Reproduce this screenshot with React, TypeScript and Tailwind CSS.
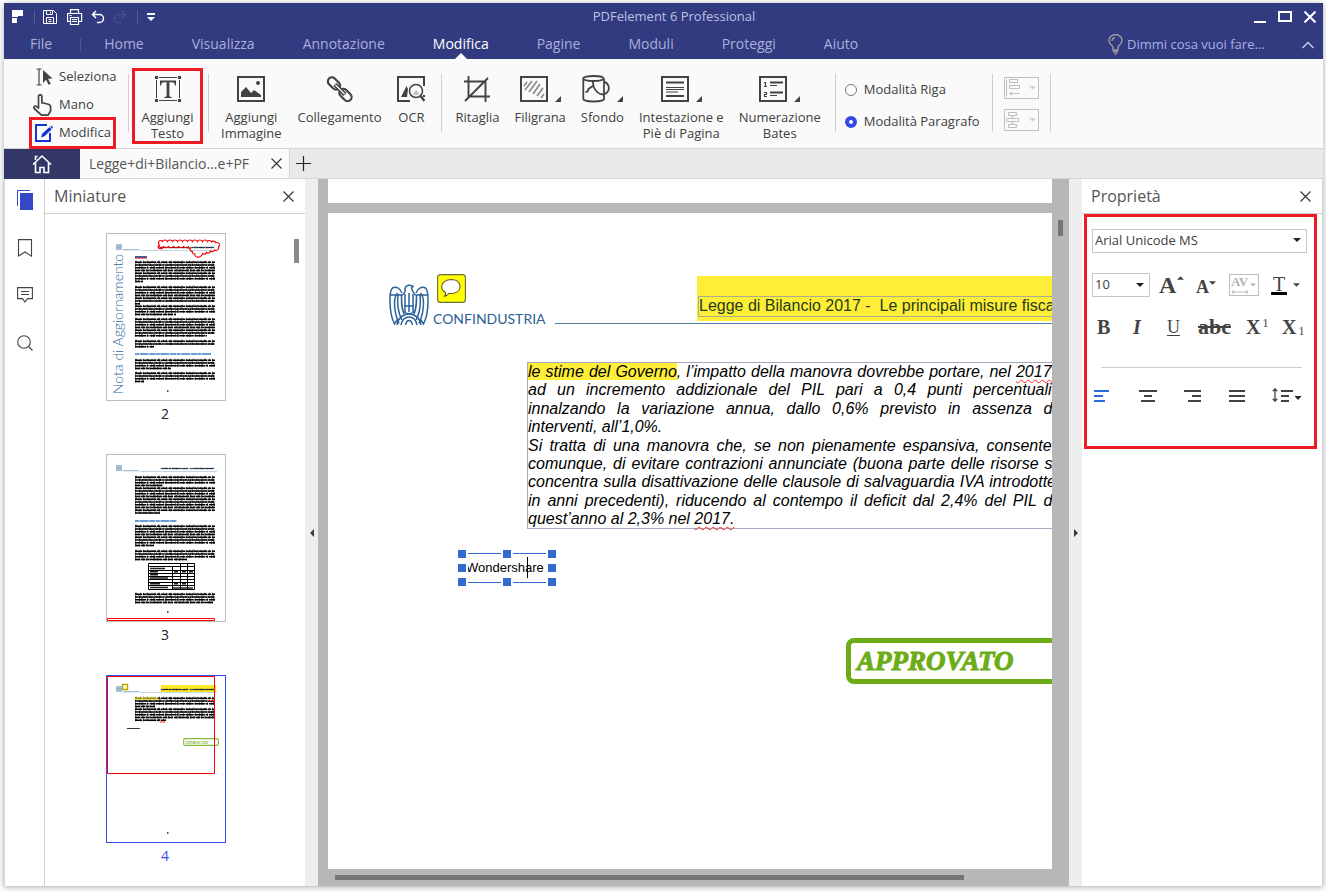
// App.tsx - PDF editor window: ribbon, thumbnails, page view and text properties
import React, { useState } from 'react';
import clsx from 'clsx';

const MENU = ['Home', 'Visualizza', 'Annotazione', 'Modifica', 'Pagine', 'Moduli', 'Proteggi', 'Aiuto'];

/* ---------- small shared pieces ---------- */

function CloseIcon({ className }: { className?: string }) {
  return (
    <svg viewBox="0 0 11 11" className={clsx('size-[11px]', className)} fill="none" stroke="currentColor" strokeWidth="1.1">
      <path d="M.5.5l10 10M10.5.5l-10 10" />
    </svg>
  );
}

function Separator() {
  return <div className="mt-[15px] h-[58px] w-px shrink-0 bg-[#cfcfcf]" />;
}

function DownCaret({ className }: { className?: string }) {
  return (
    <svg viewBox="0 0 8 4" className={clsx('h-1', className)} fill="currentColor">
      <path d="M0 0h8L4 4z" />
    </svg>
  );
}

interface RibbonButtonProps {
  lines: string[];
  icon: React.ReactNode;
  menu?: boolean;
}

function RibbonButton({ lines, icon, menu }: RibbonButtonProps) {
  return (
    <button className="flex shrink-0 flex-col items-center">
      <span className="flex h-7 items-end gap-[7px]">
        <svg viewBox="0 0 28 28" className="size-7" fill="none" stroke="#434343" strokeWidth="2">
          {icon}
        </svg>
        {menu && (
          <svg viewBox="0 0 6 6" className="mb-px size-1.5" fill="#434343">
            <path d="M6 0v6H0z" />
          </svg>
        )}
      </span>
      <span className="mt-1.5 text-center text-[13px] leading-4 whitespace-nowrap">
        {lines.map((line) => (
          <span key={line} className="block">{line}</span>
        ))}
      </span>
    </button>
  );
}

/* ---------- title bar and menu ---------- */

function TitleBar() {
  return (
    <div className="flex h-[27px] items-center text-white">
      <div className="flex flex-1 items-center pl-2">
        <svg viewBox="0 0 12 14" className="h-3.5 w-3" fill="#fff">
          <path d="M0 0h11v6H6v1H0zM0 8h5v5H0z" />
        </svg>
        <div className="ml-2.5 h-3.5 w-px bg-[#535b9c]" />
        <button aria-label="Salva" className="ml-2">
          <svg viewBox="0 0 14 14" className="size-3.5" fill="none" stroke="#fff">
            <path d="M.5.5h10l3 3v10H.5zM3.500.5v4h6v-4M7.500 1.500v2M3.500 13V7.500h7V13M5.500 9.500h3M5.500 11.500h3" />
          </svg>
        </button>
        <button aria-label="Stampa" className="ml-2.5">
          <svg viewBox="0 0 16 16" className="size-4" fill="none" stroke="#fff" strokeWidth="1.2">
            <path d="M3.500 4.500V.6h8v3.900M3 12.500H.6v-8h14v8H12M3.500 8.500h8v7h-8zM5 10.500h5M5 12.500h5M2.500 6.500h2" />
          </svg>
        </button>
        <button aria-label="Annulla" className="ml-2">
          <svg viewBox="0 0 14 14" className="size-3.5" fill="none" stroke="#fff" strokeWidth="1.500">
            <path d="M5 1L1.500 4.500 5 8M1.500 4.500h7a4 4 0 010 8H6" />
          </svg>
        </button>
        <button aria-label="Ripeti" className="ml-2">
          <svg viewBox="0 0 14 14" className="size-3.5" fill="none" stroke="#4a5296" strokeWidth="1.200">
            <path d="M9 1l3.500 3.500L9 8M12.500 4.500h-7a4 4 0 000 8H8" />
          </svg>
        </button>
        <div className="ml-2.5 h-3.5 w-px bg-[#535b9c]" />
        <button aria-label="Personalizza barra" className="ml-[9px]">
          <svg viewBox="0 0 8 8" className="size-2" fill="#fff">
            <path d="M0 0h8v2H0zM0 4h8L4 8z" />
          </svg>
        </button>
      </div>
      <div className="pl-5 text-[13px] text-[#bcc1e4]">PDFelement 6 Professional</div>
      <div className="flex flex-1 items-center justify-end gap-3 pr-[7px]">
        <button aria-label="Riduci a icona" className="flex h-3 items-end">
          <span className="block h-0.5 w-3 bg-white" />
        </button>
        <button aria-label="Ingrandisci" className="h-[11px] w-3.5 border-2 border-white" />
        <button aria-label="Chiudi">
          <svg viewBox="0 0 12 12" className="size-3" fill="none" stroke="#fff" strokeWidth="2">
            <path d="M.5.5l11 11M11.500.5l-11 11" />
          </svg>
        </button>
      </div>
    </div>
  );
}

function MenuBar() {
  const [active, setActive] = useState('Modifica');
  return (
    <nav className="flex h-[29px] items-center pl-[26px] text-sm text-[#a9afdb]">
      <button className="pb-0.5">File</button>
      <div className="ml-7 h-3.5 w-px bg-[#4c5597]" />
      <div className="ml-[23px] flex h-full gap-12">
        {MENU.map((item) => (
          <button
            key={item}
            onClick={() => setActive(item)}
            className={clsx('relative pb-0.5', item === active && 'text-white')}
          >
            {item}
            {item === active && (
              <svg viewBox="0 0 12 6" className="absolute bottom-0 left-1/2 h-1.5 w-3 -translate-x-1/2" fill="#fafafa">
                <path d="M6 0l6 6H0z" />
              </svg>
            )}
          </button>
        ))}
      </div>
      <label className="ml-auto flex items-center gap-1">
        <svg viewBox="0 0 15 21" className="h-[21px] w-[15px]" fill="none" stroke="#9d9d9d" strokeWidth="1.400">
          <path d="M5 16v-3C4 11 1 10 1 6.500a6.500 6 0 0113 0C14 10 11 11 10 13v3zM4 7c0-2 1-3 3-3.200" />
          <path d="M5 17.500h5M6.500 19.800h2" strokeWidth="1.800" />
        </svg>
        <input
          aria-label="Dimmi cosa vuoi fare"
          placeholder="Dimmi cosa vuoi fare..."
          className="w-[174px] bg-transparent text-[13px] outline-none placeholder:text-[#a9b0e4]"
        />
      </label>
      <button aria-label="Comprimi barra" className="pr-2">
        <svg viewBox="0 0 14 8" className="h-2 w-3.5" fill="none" stroke="#cfd3ef" strokeWidth="1.300">
          <path d="M1.500 7L7 1.500 12.500 7" />
        </svg>
      </button>
    </nav>
  );
}

/* ---------- ribbon ---------- */

function ToolList() {
  return (
    <div className="flex w-24 shrink-0 flex-col items-start gap-0.5 pt-[5px] text-[13px]">
      <button className="flex h-[26px] items-center gap-1.5 pl-px">
        <svg viewBox="0 0 20 20" className="size-5" fill="none" stroke="#434343">
          <path d="M3.500 2h5M3.500 18h5M6 2v16" strokeWidth="1.200" />
          <path d="M10 3l9.500 8.500-4.500.2 2.800 5-2.200 1.100L13 12.800 10 16z" fill="#434343" stroke="none" />
        </svg>
        Seleziona
      </button>
      <button className="flex h-[26px] items-center gap-1.5 pl-px">
        <svg viewBox="0 0 20 22" className="h-[22px] w-5" fill="none" stroke="#434343" strokeWidth="1.700" strokeLinejoin="round">
          <path d="M5.500 12V2.500a1.700 1.700 0 013.400 0V9h1.800l5.300 1.500c1.200.5 1.600 1.200 1.600 2.500v4L15 21.200H8.500L1.200 14.500c-.8-1 .2-2.800 1.700-2.300l2.600 2z" />
        </svg>
        Mano
      </button>
      <button className="flex h-[26px] items-center gap-1.5 pr-0.5 pl-px outline-3 outline-[#ed1c24]">
        <svg viewBox="0 0 20 20" className="size-5" fill="none" stroke="#1636d2" strokeWidth="2">
          <path d="M14 2H3v16h14v-8" />
          <path d="M8 14.500l1.200-3.800L16.500 4l2.300 2.300-7.200 7z" fill="#1636d2" stroke="none" />
          <path d="M17.200 3.400l1-1 2 2-1 1z" fill="#1636d2" stroke="none" />
        </svg>
        Modifica
      </button>
    </div>
  );
}

function ModeRadios() {
  const [mode, setMode] = useState('Modalità Paragrafo');
  return (
    <div className="ml-[9px] flex shrink-0 flex-col gap-2.5 pt-5 text-[13px]">
      {['Modalità Riga', 'Modalità Paragrafo'].map((label) => (
        <label key={label} className="flex h-[22px] items-center gap-[7px]">
          <input
            type="radio"
            name="mode"
            checked={mode === label}
            onChange={() => setMode(label)}
            className="size-3 appearance-none rounded-full border border-[#777] bg-white checked:border-4 checked:border-[#3448e8]"
          />
          {label}
        </label>
      ))}
    </div>
  );
}

function Ribbon() {
  return (
    <div className="flex h-[90px] border-b border-[#d5d5d5] bg-[#fafafa] pl-7 text-[#404040]">
      <ToolList />
      <Separator />
      <div className="mt-3 ml-[6px] flex h-[70px] w-[65px] shrink-0 justify-center pt-1 outline-3 outline-[#ed1c24]">
        <RibbonButton
          lines={['Aggiungi', 'Testo']}
          icon={
            <>
              <path d="M5 2.500h18M5 25.500h18M2.500 5v18M25.500 5v18" strokeWidth="1" />
              <path d="M1 1h3v3H1zM24 1h3v3h-3zM1 24h3v3H1zM24 24h3v3h-3z" fill="#434343" stroke="none" />
              <path d="M6 5.500h16v5h-1c-.5-2.200-1-3.300-3-3.300h-2.600v13.300c0 1 .5 1.400 2.200 1.500v1h-7.200v-1c1.700-.1 2.200-.5 2.200-1.500V7.200H10c-2 0-2.500 1.100-3 3.300H6z" fill="#434343" stroke="none" />
            </>
          }
        />
      </div>
      <div className="w-2 shrink-0" />
      <Separator />
      <div className="flex gap-4 pt-4 pr-4 pl-3">
        <RibbonButton
          lines={['Aggiungi', 'Immagine']}
          icon={
            <>
              <path d="M1 2h26v24H1z" />
              <path d="M4 22v-5l5-5 5 6 3-3 7 5v2z" fill="#434343" stroke="none" />
              <circle cx="21" cy="8" r="2" fill="#434343" stroke="none" />
            </>
          }
        />
        <RibbonButton
          lines={['Collegamento']}
          icon={
            <g strokeWidth="2.200">
              <rect x="1" y="4.500" width="14" height="8" rx="4" transform="rotate(45 8 8.500)" />
              <rect x="12.500" y="16" width="14" height="8" rx="4" transform="rotate(45 19.500 20)" />
              <path d="M9 9.500l10 10" strokeWidth="4.500" />
              <path d="M9.500 10l9 9" stroke="#fafafa" strokeWidth="1.200" />
            </g>
          }
        />
        <RibbonButton
          lines={['OCR']}
          icon={
            <>
              <path d="M13 26H1V2h26v9M27 20v2" />
              <path d="M4 22L9.500 11l1.500 3-1 8zM20 6.500h3" fill="#434343" stroke="none" />
              <circle cx="19" cy="16" r="6.500" strokeWidth="1.500" fill="#fafafa" />
              <path d="M16 19l3-4 3 3-1 2h-4z" fill="#c4c4c4" stroke="none" />
              <path d="M23.500 21l4 5" strokeWidth="2.400" />
            </>
          }
        />
      </div>
      <Separator />
      <div className="flex gap-[15px] pt-4 pr-3.5 pl-[13px]">
        <RibbonButton
          lines={['Ritaglia']}
          icon={<path d="M5.500 1v20.500H27M1 6.500h21.500V27M2 26L25 3" strokeWidth="1.900" />}
        />
        <RibbonButton
          menu
          lines={['Filigrana']}
          icon={
            <>
              <path d="M1 2h26v24H1z" />
              <path d="M4 11l3-4M5 15l7-9M9 17l8-11M13 19l7-10M17 21l6-8M21 23l3-4" stroke="#8c8c8c" strokeWidth="1.700" />
            </>
          }
        />
        <RibbonButton
          menu
          lines={['Sfondo']}
          icon={
            <g strokeWidth="1.800">
              <ellipse cx="11.500" cy="3.500" rx="10.200" ry="2.500" />
              <path d="M1.300 4v20c0 1.200 3 2.500 10.200 2.500S22 25.200 22 24V4M11 10.500c2 5 6 9 10.500 9 4.500-1 6-5 5-8.500-.8-2.300-2.500-4-5-4.500M10.500 5.500l1 5-5 3.500c-1 1.500.5 3-3 3" />
            </g>
          }
        />
        <RibbonButton
          menu
          lines={['Intestazione e', 'Piè di Pagina']}
          icon={
            <>
              <path d="M1 2h26v24H1z" />
              <path d="M5 7.500h18M5 21h18" strokeWidth="2" />
              <path d="M5 12.500h18M5 14.500h18M5 17h12" strokeWidth="1" />
            </>
          }
        />
        <RibbonButton
          menu
          lines={['Numerazione', 'Bates']}
          icon={
            <>
              <path d="M1 2h26v24H1z" />
              <path d="M5 7.500h1.500v4M5 11.500h3M5 17.500h2.500v2H5.500v2H8" strokeWidth="1.200" />
              <path d="M11 7.500h13M11 17.500h13" strokeWidth="1.800" />
              <path d="M11 10.500h7M11 20.500h7" strokeWidth="1.200" />
            </>
          }
        />
      </div>
      <Separator />
      <ModeRadios />
      <div className="w-3 shrink-0" />
      <Separator />
      <div className="flex shrink-0 flex-col gap-2.5 px-[11px] pt-[18px]">
        <button aria-label="Allinea oggetti" disabled className="h-[22px] w-[35px]">
          <svg viewBox="0 0 35 22" fill="none" stroke="#bdbdbd">
            <path d="M.5.5h34v21H.5zM2.500 2.500v17M5.500 2.500h8v3h-8zM5.500 8.500h10v3h-10zM5.500 16.500h10M8 14.500l-2.500 2 2.500 2" />
            <path d="M25 9h7l-3.500 4z" fill="#d5d5d5" stroke="none" />
          </svg>
        </button>
        <button aria-label="Distribuisci oggetti" disabled className="h-[22px] w-[35px]">
          <svg viewBox="0 0 35 22" fill="none" stroke="#bdbdbd">
            <path d="M.5.5h34v21H.5zM4.500 3.500h8v3h-8zM2.500 9.500h12v3h-12zM4.500 15.500h8v3h-8zM8.500 6.500v3M8.500 12.500v3" />
            <path d="M25 9h7l-3.500 4z" fill="#d5d5d5" stroke="none" />
          </svg>
        </button>
      </div>
      <Separator />
    </div>
  );
}

function DocumentTabs() {
  return (
    <div className="flex h-[30px] border-b border-[#d5d5d5] bg-[#e9e9e9]">
      <button aria-label="Home" className="-mb-px flex w-[76px] items-center justify-center bg-[#323768]">
        <svg viewBox="0 0 20 20" className="size-5" fill="none" stroke="#fff" strokeWidth="1.600">
          <path d="M1 10.500L10 2l9 8.500M3.500 9v9.500h4.500v-5h4v5h4.500V9M3.500 6V2.500h2" />
        </svg>
      </button>
      <div className="flex items-center border-r border-[#d5d5d5] bg-[#fafafa] pr-[7px] pl-[9px] text-sm text-[#555]">
        <span className="w-[182px]">Legge+di+Bilancio...e+PF</span>
        <button aria-label="Chiudi scheda">
          <CloseIcon className="text-[#333]" />
        </button>
      </div>
      <button aria-label="Nuova scheda" className="ml-1.5">
        <svg viewBox="0 0 15 15" className="size-[15px]" stroke="#222" strokeWidth="1.200">
          <path d="M7.500 0v15M0 7.500h15" />
        </svg>
      </button>
    </div>
  );
}

/* ---------- thumbnails ---------- */

function SideRail() {
  return (
    <div className="flex w-10 shrink-0 flex-col items-center border-r border-[#cfcfcf] bg-white">
      <button aria-label="Miniature" className="mt-[11px] h-5">
        <svg viewBox="0 0 16 20" className="h-5 w-4">
          <path d="M.5 16V.5H13" fill="none" stroke="#3548c8" />
          <path d="M3 3h13v17H3z" fill="#3548c8" />
        </svg>
      </button>
      <button aria-label="Segnalibri" className="mt-[29px] h-[18px]">
        <svg viewBox="0 0 16 18" className="h-[18px] w-4" fill="none" stroke="#444" strokeWidth="1.100">
          <path d="M1.500.6h13v16.500L8 13l-6.500 4z" />
        </svg>
      </button>
      <button aria-label="Commenti" className="mt-[30px] h-4">
        <svg viewBox="0 0 16 16" className="size-4" fill="none" stroke="#444" strokeWidth="1.100">
          <path d="M.6.600h14.800v11H10.500L8 15l-2.500-3.400H.6zM4 4.500h8M4 7.500h8" />
        </svg>
      </button>
      <button aria-label="Cerca" className="mt-8 h-4">
        <svg viewBox="0 0 16 16" className="size-4" fill="none" stroke="#444" strokeWidth="1.100">
          <circle cx="7" cy="7" r="6.300" />
          <path d="M11.500 11.500l4 4" />
        </svg>
      </button>
    </div>
  );
}

const DASHES = ['7 .7 4 .5 9 .6 3 .8', '3 .8 10 .5 5 .7 6 .5', '11 .6 2 .9 6 .5 8 .7', '5 .5 5 .9 3 .5 12 .6'];
const ASCENDERS = ['1.500 2 1 3 2 1.500', '2 3 1 2 1 2.500', '1 2 2.500 3 1 1', '1 3 1 1 2 4'];

// A block of body copy too small to read: one dashed bar for each line
function CopyBlock({ top, lines, last = 40 }: { top: number; lines: number; last?: number }) {
  return (
    <g stroke="#000">
      {Array.from({ length: lines }, (_, i) => {
        const width = i === lines - 1 ? last : 80;
        const y = top + 1.3 + i * 2.75;
        return (
          <g key={i}>
            <path d={`M29 ${y}h${width}`} strokeWidth="1.500" strokeDasharray={DASHES[i % 4]} />
            <path d={`M29 ${y - 0.2}h${width}`} strokeWidth="2.500" strokeDasharray={ASCENDERS[(i + 1) % 4]} opacity=".6" />
          </g>
        );
      })}
    </g>
  );
}

function ThumbHeader() {
  return (
    <g>
      <path d="M10 11h6v6h-6z" fill="#b8cadd" />
      <path d="M11 11v6M13 11v6M15 11v6M10 14h6" stroke="#7d9dbe" strokeWidth=".5" />
      <path d="M17 16.700h16" stroke="#9db6d0" strokeWidth="1.200" />
      <path d="M34 17.500h77" stroke="#c5d3e0" />
      <text x="55" y="15" fontSize="2.500" fontWeight="bold" fontFamily="Liberation Sans, sans-serif" fill="#06162e" stroke="#06162e" strokeWidth=".3">
        Legge di Bilancio 2017 - Le principali misure
      </text>
    </g>
  );
}

function ThumbTwo() {
  return (
    <>
      <ThumbHeader />
      <path d="M29 24h12" stroke="#3c5a9a" strokeWidth="2" />
      <path d="M29 25.200h12" stroke="#f33" strokeWidth="1" />
      <text
        transform="translate(17 161) rotate(-90)"
        fontSize="14"
        fontFamily="Lato, sans-serif"
        fontWeight="300"
        fill="#2f669c"
      >
        Nota di Aggiornamento
      </text>
      <CopyBlock top={28} lines={8} last={8} />
      <CopyBlock top={53} lines={7} last={5} />
      <CopyBlock top={72} lines={4} last={41} />
      <CopyBlock top={85} lines={7} last={72} />
      <CopyBlock top={107} lines={3} last={19} />
      <path d="M29 121h76" stroke="#3d7dc4" strokeWidth="1.600" strokeDasharray="4 .6 9 .7 6 .5" />
      <CopyBlock top={126} lines={4} last={36} />
      <CopyBlock top={139} lines={4} last={9} />
      <path d="M61 158h1.500" stroke="#222" strokeWidth="1.500" />
      <path
        d="M56 15.500c-4 1-5-2-2.500-3.500C51 9 54 6 56.500 8.500c.5-2 4-2 5 0 .5-2 4-2 5 0 .5-2 4-2 5 0 .5-2 4-2 5 0 .5-2 4-2 5 0 .5-2 4-2 5 0 .5-2 4-2 5 0 .5-2 4-2 5 0 .5-2 4-2 5 0 .5-1.500 3-1.500 4 .5 .500-1.500 3-1 4.500.5 3-.5 5 2.500 2.500 4 1 3-2 5-4 3.500-1 2-3 2-4 1 0 2-2.500 2.500-4 1.500-.5 2-2.500 2-4 1-.500 2.500-3 4-4.500 3.500-2 .5-3.500-1.500-3-3-2 0-3-1-2.500-2.500-1.500 0-2.500-1-2-2.500-1 0-2-.5-2-2-1 1-4 1-5-.5-1 1.500-4 1.500-5 0-1 1.500-4 1.500-5 0-1 1.500-4 1.500-5 0-1 1.500-4 1.500-5 0-1 1.500-3.500 1.500-4.500 0z"
        fill="none"
        stroke="#f00000"
        strokeWidth="1.100"
      />
    </>
  );
}

function ThumbThree() {
  return (
    <>
      <ThumbHeader />
      <CopyBlock top={22} lines={4} last={28} />
      <CopyBlock top={33} lines={10} last={25} />
      <path d="M29 67h42" stroke="#3d7dc4" strokeWidth="1.600" strokeDasharray="4 .6 9 .7 6 .5" />
      <CopyBlock top={71} lines={8} last={19} />
      <CopyBlock top={96} lines={4} last={52} />
      <path d="M42.500 109.500h46v26h-46z" fill="#fff" stroke="#000" />
      <path d="M42 112.500h47M42 116.500h47M42 119.500h47M42 122.500h47M42 125.500h47M42 128.500h47M42 131.500h47M66.500 112v23M74.500 109v26M81.500 109v26" stroke="#000" strokeWidth="1" />
      <path d="M44 114.500h15M44 117.800h8M44 120.800h8M44 124h18M44 129.800h10M44 133.500h18M68 117.800h4M76 117.800h4M83 117.800h4M68 129.800h4M76 129.800h4M67 134h20" stroke="#222" strokeWidth="1.600" />
      <CopyBlock top={139} lines={4} last={78} />
      <path d="M61 158h1.500" stroke="#222" strokeWidth="1.500" />
      <path d="M1.500 164.500h107v2H1.500z" fill="none" stroke="#f00" />
    </>
  );
}

function ThumbFour() {
  return (
    <>
      <path d="M55 10h55v7H55z" fill="#fee92a" />
      <ThumbHeader />
      <path d="M16.500 9.500h5v5h-5z" fill="#ffd" stroke="#b3a900" strokeWidth="1.400" />
      <CopyBlock top={22} lines={4} last={20} />
      <CopyBlock top={33} lines={5} last={31} />
      <path d="M28.500 22h24v3h-24z" fill="#fee92a" opacity=".6" />
      <path d="M102 25.500h7M54 47h5" stroke="#f22" />
      <text x="21" y="54" fontSize="2" fontWeight="bold" fontFamily="Liberation Sans, sans-serif" stroke="#000" strokeWidth=".2">
        Wondershare
      </text>
      <rect x="77.700" y="63.700" width="34.600" height="6.600" rx="1.200" fill="#fff" stroke="#82bd3a" strokeWidth="1.200" />
      <text x="79" y="68.500" fontSize="4" fontWeight="bold" fontStyle="italic" fontFamily="Liberation Serif, serif" fill="#6cac16">
        APPROVATO
      </text>
      <path d="M61 158h1.500" stroke="#222" strokeWidth="1.500" />
      <path d="M1.500 1.500h107v97h-107z" fill="none" stroke="#f00" />
    </>
  );
}

const THUMBS = [
  { page: 2, drawing: <ThumbTwo /> },
  { page: 3, drawing: <ThumbThree /> },
  { page: 4, drawing: <ThumbFour /> },
];

function PanelHeader({ title }: { title: string }) {
  return (
    <div className="flex h-[35px] items-center justify-between border-b border-[#cfcfcf] pr-[11px] pl-[9px]">
      <h2 className="text-base text-[#555]">{title}</h2>
      <button aria-label={`Chiudi ${title}`}>
        <CloseIcon className="text-[#333]" />
      </button>
    </div>
  );
}

function ThumbnailPanel() {
  const [current, setCurrent] = useState(4);
  return (
    <aside className="relative w-[260px] shrink-0 overflow-hidden bg-white">
      <PanelHeader title="Miniature" />
      <div className="flex flex-col items-start pt-[19px] pl-[61px]">
        {THUMBS.map(({ page, drawing }) => (
          <button key={page} onClick={() => setCurrent(page)} className="flex h-[221px] flex-col items-center">
            <svg
              viewBox="1 1 118 166"
              className={clsx('h-[168px] w-[120px] border bg-white', page === current ? 'border-[#3b4cea]' : 'border-[#bcbcbc]')}
            >
              {drawing}
            </svg>
            <span className={clsx('mt-[3px] pr-0.5 text-sm', page === current ? 'text-[#3b4cea]' : 'text-[#222]')}>{page}</span>
          </button>
        ))}
      </div>
      <div className="absolute top-[60px] right-1.5 h-6 w-[5px] bg-[#8a8a8a]" />
    </aside>
  );
}

function Splitter({ direction }: { direction: 'left' | 'right' }) {
  return (
    <button aria-label="Comprimi pannello" className="flex w-[13px] shrink-0 items-center justify-center bg-[#eee]">
      <svg viewBox="0 0 4 8" className="h-2 w-1" fill="#3a3a3a">
        <path d={direction === 'left' ? 'M4 0v8L0 4z' : 'M0 0v8l4-4z'} />
      </svg>
    </button>
  );
}

/* ---------- page view ---------- */

const JUSTIFIED = 'whitespace-nowrap [text-align-last:justify]';
const MISSPELLED = 'underline decoration-[#f22] decoration-wavy decoration-1 underline-offset-2';

function EagleLogo() {
  return (
    <svg viewBox="0 0 40 42" className="mt-2.5 h-[42px] w-10 shrink-0" fill="none" stroke="#2c6398" strokeWidth="1.500">
      <path d="M13 9C11 4 7 2 3.500 4 .5 7 1 12 1 17c0 9 1.500 17 4.500 23l2.500-4 2 3.500C7 33 5.500 26 5.500 19c0-4 .5-7 3-10" />
      <path d="M27 9c2-5 6-7 9.500-5 3 3 2.500 8 2.500 13 0 9-1.500 17-4.500 23L32 36l-2 3.500C33 33 34.500 26 34.500 19c0-4-.5-7-3-10" />
      <path d="M16 8V4.500C16.500 1 20 .5 24 2.500L22.500 4 24 8M1 11h13M26 11h13M12 11c2 1 3-2 4-3M28 11c-2 1-3-2-4-3" />
      <path d="M9 10c-1 10 0 19 4 26M12.500 11c0 9 0 13 2.500 19M31 10c1 10 0 19-4 26M27.500 11c0 9 0 13-2.500 19" />
      <path d="M16 10v18M20 9v19M24 10v18M15 22h10M15 28c3 2 7 2 10 0" />
      <path d="M8 41c1-7 6-11 12-11s11 4 12 11M12 41c1-5 4-8 8-8s7 3 8 8M16.500 41c.5-3 1.500-4.500 3.500-4.500s3 1.500 3.500 4.500" />
    </svg>
  );
}

const HANDLES = [
  'left-0 top-0', 'left-1/2 top-0', 'left-full top-0',
  'left-0 top-1/2', 'left-full top-1/2',
  'left-0 top-full', 'left-1/2 top-full', 'left-full top-full',
];

function SelectedTextBox() {
  return (
    <div className="relative mt-6 ml-[134px] flex h-[30px] w-[90px] items-center border-y border-[#326dcd] pl-1">
      <span className="text-[13px] leading-4 text-black">Wondershare</span>
      <div className="absolute top-[3px] left-[65px] h-[21px] w-px bg-black" />
      {HANDLES.map((place) => (
        <div
          key={place}
          className={clsx('absolute size-3 -translate-x-1/2 -translate-y-1/2 border-2 border-white bg-[#326dcd]', place)}
        />
      ))}
    </div>
  );
}

function PageView() {
  return (
    <main className="relative flex min-w-0 flex-1 flex-col gap-2.5 bg-[#b7b7b7] pr-[17px] pb-[17px] pl-2.5 [font-family:'Liberation_Sans',Arial,sans-serif]">
      <div className="h-6 shrink-0 bg-white" />
      <article className="min-h-0 flex-1 overflow-hidden bg-white">
        <header className="flex pt-[61px] pl-[61px]">
          <EagleLogo />
          <div className="ml-1 w-[122px] shrink-0">
            <svg viewBox="0 0 29 29" className="ml-1 size-[29px]">
              <rect x=".6" y=".6" width="27.800" height="27.800" rx="3" fill="#ff0" stroke="#6b6b3a" strokeWidth="1.100" />
              <path d="M8.500 18.500C2 15 4 6 14 5.500c10.500 0 12 11 3.500 13.500-2 .6-4 .7-5.500.3-1 1.500-2.500 2.500-4.500 3 1-1.300 1.300-2.500 1-3.800z" fill="#fff" stroke="#6b5a3a" strokeWidth="1.100" />
            </svg>
            <div className="mt-1.5 text-sm leading-5 text-[#2c5f94] [font-family:Lato,sans-serif]">CONFINDUSTRIA</div>
          </div>
          <div className="min-w-0 flex-1 pt-0.5">
            <div className="ml-[142px] h-[45px] bg-[#ffee38] pt-5 pl-px">
              <div className="h-[21px] border border-r-0 border-[#a7ab90] text-base leading-[18px] whitespace-pre text-[#1f3d1a]">
                {'Legge di Bilancio 2017 -  Le principali misure fiscali'}
              </div>
            </div>
            <div className="mt-0.5 h-px bg-[#4c80a0]" />
          </div>
        </header>

        <div className="mt-[33px] ml-[199px] flex h-[167px] w-[530px] flex-col justify-between border border-[#a4a9bf] text-base leading-[18px] text-black italic">
          <p className={JUSTIFIED}>
            <mark className="bg-[#ffee38] text-black">le stime del Governo</mark>, l’impatto della manovra dovrebbe portare, nel{' '}
            <span className={MISSPELLED}>2017,</span>
          </p>
          <p className={JUSTIFIED}>ad un incremento addizionale del PIL pari a 0,4 punti percentuali,</p>
          <p className={JUSTIFIED}>innalzando la variazione annua, dallo 0,6% previsto in assenza di</p>
          <p>interventi, all’1,0%.</p>
          <p className={JUSTIFIED}>Si tratta di una manovra che, se non pienamente espansiva, consente,</p>
          <p className={JUSTIFIED}>comunque, di evitare contrazioni annunciate (buona parte delle risorse si</p>
          <p className={JUSTIFIED}>concentra sulla disattivazione delle clausole di salvaguardia IVA introdotte</p>
          <p className={JUSTIFIED}>in anni precedenti), riducendo al contempo il deficit dal 2,4% del PIL di</p>
          <p>
            quest’anno al 2,3% nel <span className={MISSPELLED}>2017.</span>
          </p>
        </div>

        <SelectedTextBox />

        <div className="mt-[55px] ml-[518px] flex h-[46px] w-[240px] items-center rounded-lg border-[5px] border-[#6cac16] pl-1.5">
          <span className="text-[27px] leading-7 font-bold text-[#6cac16] italic [-webkit-text-stroke:1px_#6cac16] [font-family:'Liberation_Serif',serif]">
            APPROVATO
          </span>
        </div>
      </article>
      <div className="absolute top-[41px] right-1.5 h-4 w-[5px] bg-[#757575]" />
      <div className="absolute right-[105px] bottom-1.5 left-[17px] h-[5px] bg-[#757575]" />
    </main>
  );
}

/* ---------- properties ---------- */

const SERIF = "[font-family:'Liberation_Serif',serif]";

function PropertiesPanel() {
  return (
    <aside className="w-[240px] shrink-0 bg-white">
      <PanelHeader title="Proprietà" />
      <div className="mr-[5px] ml-0.5 h-[235px] border-3 border-[#ed1c24] pt-3 pr-[7px] pl-[5px] text-[#434343]">
        <label className="relative block">
          <select aria-label="Carattere" className="block h-6 w-full appearance-none border border-[#c6c6c6] bg-white pl-0.5 text-[13px] text-[#404040]">
            <option>Arial Unicode MS</option>
          </select>
          <DownCaret className="pointer-events-none absolute top-[9px] right-1.5 w-2 text-[#222]" />
        </label>

        <div className="mt-5 flex h-6 items-center">
          <label className="relative block">
            <select aria-label="Dimensione" className="block h-6 w-[58px] appearance-none border border-[#c6c6c6] bg-white pl-0.5 text-[13px] text-[#404040]">
              <option>10</option>
            </select>
            <DownCaret className="pointer-events-none absolute top-2.5 right-1.5 w-2 text-[#222]" />
          </label>
          <button aria-label="Aumenta dimensione" className="ml-[9px] flex h-6 w-7 items-start">
            <span className={clsx('text-2xl leading-6 font-bold', SERIF)}>A</span>
            <DownCaret className="mt-[3px] ml-px w-[7px] rotate-180" />
          </button>
          <button aria-label="Riduci dimensione" className="ml-[9px] flex h-6 w-6 items-start">
            <span className={clsx('pt-0.5 text-lg leading-6 font-bold', SERIF)}>A</span>
            <DownCaret className="mt-2 w-[7px]" />
          </button>
          <button aria-label="Spaziatura caratteri" disabled className="relative ml-[9px] h-[22px] w-[30px] border border-[#bdbdbd] text-[#b3b3b3]">
            <span className={clsx('absolute top-0 left-px text-[13px] leading-[14px] font-bold', SERIF)}>AV</span>
            <DownCaret className="absolute top-2 right-0.5 w-1.5" />
            <svg viewBox="0 0 18 6" className="absolute bottom-0 left-px h-1.5 w-[18px]" fill="none" stroke="currentColor">
              <path d="M1 3h16M3 1L1 3l2 2M15 1l2 2-2 2" />
            </svg>
          </button>
          <button aria-label="Colore testo" className="ml-3 flex items-center gap-1.5">
            <span className={clsx('flex h-5 w-4 items-center justify-center border-b-3 border-black text-xl leading-5', SERIF)}>T</span>
            <DownCaret className="w-[7px]" />
          </button>
        </div>

        <div
          className={clsx(
            'mt-[18px] grid h-6 grid-cols-[36px_34px_31px_48px_36px_22px] items-center justify-items-start pl-[5px] text-xl leading-6 font-bold',
            SERIF,
          )}
        >
          <button aria-label="Grassetto">B</button>
          <button aria-label="Corsivo" className="italic">I</button>
          <button aria-label="Sottolineato" className="text-lg leading-6 font-normal underline underline-offset-2">U</button>
          <button aria-label="Barrato" className="text-[22px] leading-6 line-through">abc</button>
          <button aria-label="Apice" className="flex h-6 items-start">
            X<span className="ml-0.5 text-xs leading-4 font-normal">1</span>
          </button>
          <button aria-label="Pedice" className="flex h-6 items-start">
            X<span className="ml-0.5 pt-2 text-xs leading-4 font-normal">1</span>
          </button>
        </div>

        <div className="mt-7 ml-[9px] mr-[5px] h-px bg-[#cfcfcf]" />

        <div className="mt-5 flex items-center justify-between pr-[5px] pl-0.5">
          <button aria-label="Allinea a sinistra">
            <svg viewBox="0 0 18 14" className="h-3.5 w-[18px]" stroke="#2c6be0" strokeWidth="2">
              <path d="M0 3h15M0 8h9M0 13h11" />
            </svg>
          </button>
          <button aria-label="Centra">
            <svg viewBox="0 0 18 14" className="h-3.5 w-[18px]" stroke="#434343" strokeWidth="2">
              <path d="M0 3h18M5 8h8M2 13h14" />
            </svg>
          </button>
          <button aria-label="Allinea a destra">
            <svg viewBox="0 0 18 14" className="h-3.5 w-[18px]" stroke="#434343" strokeWidth="2">
              <path d="M1 3h17M9 8h9M5 13h13" />
            </svg>
          </button>
          <button aria-label="Giustifica">
            <svg viewBox="0 0 18 14" className="h-3.5 w-[18px]" stroke="#434343" strokeWidth="2">
              <path d="M1 3h16M1 8h16M1 13h16" />
            </svg>
          </button>
          <button aria-label="Interlinea">
            <svg viewBox="0 0 30 14" className="h-3.5 w-[30px]" fill="none" stroke="#434343" strokeWidth="2">
              <path d="M9 3h12M9 8h8M9 13h8" />
              <path d="M3 1v12M.8 3.200L3 .8l2.200 2.400M.8 10.800L3 13.200l2.200-2.400" strokeWidth="1.300" />
              <path d="M22.500 8h7L26 12z" fill="#222" stroke="none" />
            </svg>
          </button>
        </div>
      </div>
    </aside>
  );
}

export default function App() {
  return (
    <div className="flex h-screen flex-col bg-white pt-[3px] pr-[3px] pb-1.5 pl-1 [font-family:'Open_Sans','Noto_Sans',sans-serif]">
      <div className="flex min-h-0 flex-1 flex-col shadow-[0_1px_6px_rgba(0,0,0,0.35)]">
        <div className="bg-[#323a80]">
          <TitleBar />
          <MenuBar />
        </div>
        <Ribbon />
        <DocumentTabs />
        <div className="flex min-h-0 flex-1 border-r border-l border-r-[#d5d5d5] border-l-[#d5d5d5]">
          <SideRail />
          <ThumbnailPanel />
          <Splitter direction="left" />
          <PageView />
          <Splitter direction="right" />
          <PropertiesPanel />
        </div>
      </div>
    </div>
  );
}
